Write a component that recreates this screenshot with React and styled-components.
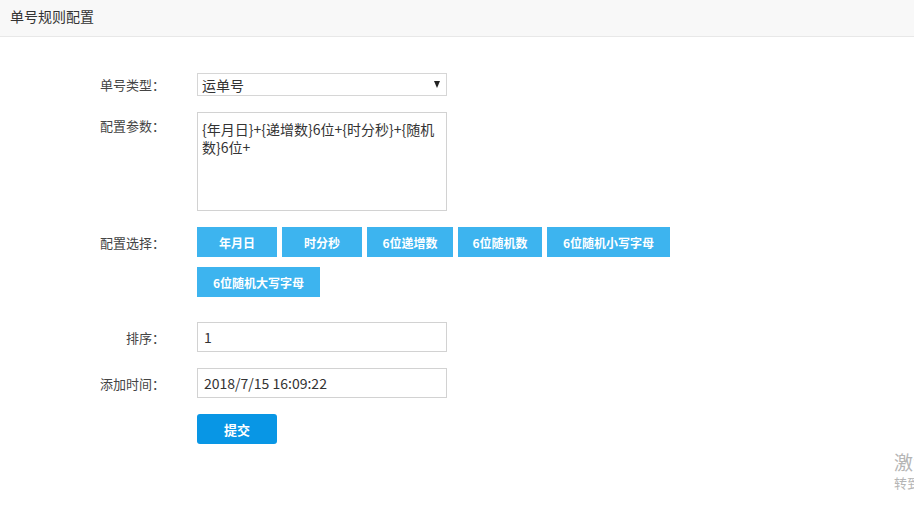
import React, { useState } from 'react';
import styled, { createGlobalStyle } from 'styled-components';

const GlobalStyle = createGlobalStyle`
  html, body {
    margin: 0;
    padding: 0;
    background: #fff;
    overflow: hidden;
  }
  body {
    font-family: "Noto Sans CJK SC", "Noto Sans", sans-serif;
    color: #333;
  }
`;

const Page = styled.div`
  position: relative;
  width: 914px;
  height: 519px;
  overflow: hidden;
`;

const Header = styled.div`
  height: 37px;
  background: #f8f8f8;
  border-bottom: 1px solid #e8e8e8;
  display: flex;
  align-items: center;
  padding: 0 10px 5px;
  box-sizing: border-box;
  font-size: 14px;
  color: #333;
`;

const Form = styled.div`
  padding-top: 36px;
  display: flex;
  flex-direction: column;
  gap: 16px;
`;

const Row = styled.div`
  display: grid;
  grid-template-columns: 165px 250px;
  column-gap: 32px;
  align-items: ${p => (p.top ? 'start' : 'center')};
  margin-top: ${p => p.spaced || 0}px;
`;

const Label = styled.div`
  text-align: right;
  font-size: 13px;
  color: #444;
  padding-top: ${p => p.offset || 0}px;
`;

const SelectBox = styled.div`
  height: 23px;
  border: 1px solid #d6d6d6;
  box-sizing: border-box;
  display: flex;
  align-items: center;
  justify-content: space-between;
  padding: 0 6px 0 4px;
  font-size: 14px;
  color: #333;
`;

const Caret = styled.span`
  width: 0;
  height: 0;
  border-left: 3.5px solid transparent;
  border-right: 3.5px solid transparent;
  border-top: 7px solid #222;
`;

const TextArea = styled.textarea`
  width: 250px;
  height: 99px;
  box-sizing: border-box;
  border: 1px solid #d2d2d2;
  padding: 7px 4px;
  font-family: inherit;
  font-size: 14px;
  line-height: 18px;
  color: #333;
  resize: none;
  outline: none;
`;

const Chips = styled.div`
  display: flex;
  flex-wrap: wrap;
  gap: 10px 5px;
  width: 480px;
`;

const Chip = styled.button`
  width: ${p => p.w}px;
  height: 30px;
  border: none;
  background: #3db4ef;
  color: #fff;
  font-family: inherit;
  font-size: 12px;
  font-weight: 700;
  padding: 0;
  cursor: pointer;
`;

const Input = styled.input`
  width: 250px;
  height: 30px;
  box-sizing: border-box;
  border: 1px solid #d2d2d2;
  padding: 0 6px;
  font-family: inherit;
  font-size: 14px;
  color: #333;
  outline: none;
`;

const Submit = styled.button`
  width: 80px;
  height: 30px;
  border: none;
  border-radius: 3px;
  background: #0896e5;
  color: #fff;
  font-family: inherit;
  font-size: 13px;
  font-weight: 700;
  cursor: pointer;
`;

// the system watermark in the corner, clipped by the window edge
const Watermark = styled.div`
  position: absolute;
  left: 894px;
  top: 450px;
  color: #b5b5b5;
  white-space: nowrap;
  line-height: 1.3;
`;

const WmTitle = styled.div`
  font-size: 19px;
`;

const WmSub = styled.div`
  font-size: 13px;
`;

const chips = [
  { text: '年月日', w: 80 },
  { text: '时分秒', w: 80 },
  { text: '6位递增数', w: 86 },
  { text: '6位随机数', w: 84 },
  { text: '6位随机小写字母', w: 123 },
  { text: '6位随机大写字母', w: 123 }
];

export default function App() {
  const [params, setParams] = useState('{年月日}+{递增数}6位+{时分秒}+{随机数}6位+');
  return (
    <Page>
      <GlobalStyle />
      <Header>单号规则配置</Header>
      <Form>
        <Row>
          <Label>单号类型：</Label>
          <SelectBox>
            <span>运单号</span>
            <Caret />
          </SelectBox>
        </Row>
        <Row top>
          <Label offset={4}>配置参数：</Label>
          <TextArea value={params} onChange={e => setParams(e.target.value)} />
        </Row>
        <Row top>
          <Label offset={6}>配置选择：</Label>
          <Chips>
            {chips.map(c => (
              <Chip key={c.text} w={c.w} onClick={() => setParams(params + '{' + c.text + '}+')}>
                {c.text}
              </Chip>
            ))}
          </Chips>
        </Row>
        <Row spaced={9}>
          <Label>排序：</Label>
          <Input defaultValue="1" />
        </Row>
        <Row>
          <Label>添加时间：</Label>
          <Input defaultValue="2018/7/15 16:09:22" />
        </Row>
        <Row>
          <span />
          <div>
            <Submit>提交</Submit>
          </div>
        </Row>
      </Form>
      <Watermark>
        <WmTitle>激活 Windows</WmTitle>
        <WmSub>转到设置以激活 Windows。</WmSub>
      </Watermark>
    </Page>
  );
}
